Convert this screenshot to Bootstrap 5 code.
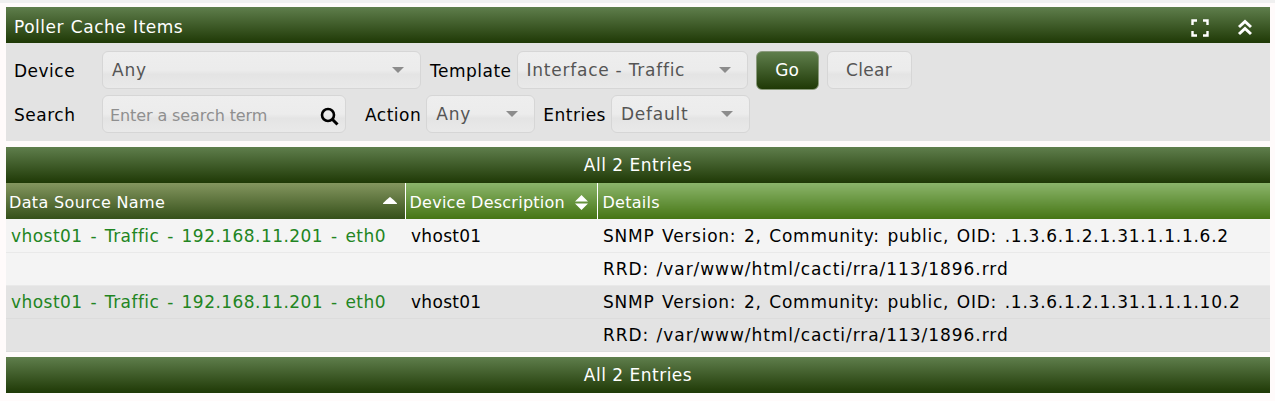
<!DOCTYPE html>
<html lang="en">
<head>
<meta charset="utf-8">
<title>Poller Cache Items</title>
<link href="https://cdn.jsdelivr.net/npm/bootstrap@5.3.0/dist/css/bootstrap.min.css" rel="stylesheet">
<style>
html,body{height:401px;overflow:hidden}
body{background:#fffbfb;font-family:"DejaVu Sans",Verdana,sans-serif;font-size:17px;color:#000;padding:7px 5px 0 6px;position:relative}
.topstrip{position:absolute;left:0;right:0;top:0;height:3px;background:#f0f0f0}
.bar-green{height:36px;background:linear-gradient(#5f7e4c,#1f3906);color:#fff}
.panel-title{padding:5px 17px 0 8px;font-size:17px;letter-spacing:.5px;word-spacing:1px}
.tool-ico{display:block}
.filter-area{background:#e3e3e3;height:98px;padding:8px 8px 0;margin-bottom:6px}
.filter-line{height:38px;margin-bottom:6px}
.flabel{white-space:nowrap;font-size:17px;letter-spacing:.5px;padding-top:3px}
.lb-device{width:88px}
.fake-select,.fake-input,.btn-clear{border:1px solid #d6d6d6;border-radius:6px;background:linear-gradient(#eeeeee 0,#ececec 50%,#e4e4e4 62%,#e9e9e9 100%);color:#555;height:38px;font-size:17px}
.fake-select{padding:2px 16px 0 9px;justify-content:space-between;letter-spacing:.75px}
.fake-select svg{flex:none;margin-top:-2px}
.w-dev{width:319px}.w-tpl{width:231px}.w-act{width:109px}.w-ent{width:139px}.w-srch{width:244px}
.fake-input{padding:4px 6px 0 7px;color:#8f8f8f;font-size:16px;letter-spacing:-.1px}
.btn-go{width:63px;height:39px;padding:2px 0 0;border:1px solid #8a9a7c;border-radius:6px;background:linear-gradient(#5f7e4c,#1f3906);color:#fff;font-size:17px;font-weight:500}
.btn-go:hover{background:linear-gradient(#5f7e4c,#1f3906);color:#fff}
.btn-clear{width:85px;padding:2px 0 0;color:#555;letter-spacing:.3px}
.ms-tpl{margin-left:9px}.ms-sel{margin-left:5px}.ms-go{margin-left:8px}.ms-act{margin-left:19px}
.count-bar{font-size:17px;letter-spacing:.5px;padding-top:2px}
.data-tbl{table-layout:fixed;width:100%;border-collapse:collapse;margin:0 0 5px;--bs-table-bg:transparent}
.data-tbl th{height:36px;padding:3px 3px 0;font-weight:400;font-size:16px;letter-spacing:.25px;color:#fff;background:linear-gradient(#8bb56b,#457514);border-right:1px solid #fff;border-bottom:0;vertical-align:middle}
.data-tbl th:last-child{border-right:0;padding-left:5px}
.data-tbl th.sorted{background:linear-gradient(#84965f,#35501a);border-right-color:#fff;letter-spacing:.35px}
.data-tbl th+th{padding-left:4px}
.data-tbl td{height:33px;padding:3px 5px 0;font-size:17px;letter-spacing:.3px;border-bottom:1px solid #e9e9e9;vertical-align:middle;white-space:nowrap;color:#000}
.data-tbl td+td{padding-left:6px}
.data-tbl td.snmp-text{letter-spacing:.75px;word-spacing:1.5px}
.data-tbl td.rrd-text{letter-spacing:.95px;word-spacing:1px}
.data-tbl tr.odd td{background:#f4f4f4}
.data-tbl tr.even td{background:#e3e3e3;border-bottom-color:#dcdcdc}
.data-tbl a{color:#228522;text-decoration:none;letter-spacing:.45px;word-spacing:2px}
.col-a{width:399px}.col-b{width:192px}
.sort-ico{margin-right:6px;flex:none}
.sort-one{margin-top:-5px;margin-right:5px}
</style>
</head>
<body>
<div class="topstrip"></div>
<div class="bar-green panel-title d-flex align-items-center justify-content-between">
  <span>Poller Cache Items</span>
  <span class="d-flex align-items-center gap-4">
    <svg class="tool-ico" width="18" height="18" viewBox="0 0 18 18" fill="none" stroke="#fff" stroke-width="2.4"><path d="M1.500 6V1.500H6M12 1.500h4.500V6M16.500 12v4.500H12M6 16.500H1.500V12"/></svg>
    <svg class="tool-ico ms-1" width="16" height="18" viewBox="0 0 16 18" fill="none" stroke="#fff" stroke-width="3"><path d="M2 8l6-5.500L14 8M2 15l6-5.500L14 15"/></svg>
  </span>
</div>
<div class="filter-area">
  <div class="filter-line d-flex align-items-center">
    <span class="flabel lb-device">Device</span>
    <div class="fake-select w-dev d-flex align-items-center"><span>Any</span><svg width="12" height="6" viewBox="0 0 12 6"><path d="M0 0h12L6 6z" fill="#8c8c8c"/></svg></div>
    <span class="flabel ms-tpl">Template</span>
    <div class="fake-select w-tpl ms-sel d-flex align-items-center"><span>Interface - Traffic</span><svg width="12" height="6" viewBox="0 0 12 6"><path d="M0 0h12L6 6z" fill="#8c8c8c"/></svg></div>
    <button type="button" class="btn btn-go ms-go">Go</button>
    <button type="button" class="btn btn-clear ms-go">Clear</button>
  </div>
  <div class="filter-line d-flex align-items-center">
    <span class="flabel lb-device">Search</span>
    <div class="fake-input w-srch d-flex align-items-center justify-content-between"><span>Enter a search term</span><svg width="19" height="19" viewBox="0 0 19 19" fill="none" stroke="#000" stroke-width="2.600"><circle cx="8" cy="8" r="6"/><path d="M12.500 12.500L17.500 17.500" stroke-width="3"/></svg></div>
    <span class="flabel ms-act">Action</span>
    <div class="fake-select w-act ms-sel d-flex align-items-center"><span>Any</span><svg width="12" height="6" viewBox="0 0 12 6"><path d="M0 0h12L6 6z" fill="#8c8c8c"/></svg></div>
    <span class="flabel ms-go">Entries</span>
    <div class="fake-select w-ent ms-sel d-flex align-items-center"><span>Default</span><svg width="12" height="6" viewBox="0 0 12 6"><path d="M0 0h12L6 6z" fill="#8c8c8c"/></svg></div>
  </div>
</div>
<div class="bar-green count-bar d-flex align-items-center justify-content-center">All 2 Entries</div>
<table class="table data-tbl">
  <colgroup><col class="col-a"><col class="col-b"><col></colgroup>
  <thead>
    <tr>
      <th class="sorted"><div class="d-flex align-items-center justify-content-between"><span>Data Source Name</span><svg class="sort-ico sort-one" width="14" height="7" viewBox="0 0 14 7"><path d="M7 0c.5 0 7 6 7 6.500S14 7 13 7H1C0 7 0 7 0 6.500S6.500 0 7 0z" fill="#fff"/></svg></div></th>
      <th><div class="d-flex align-items-center justify-content-between"><span>Device Description</span><svg class="sort-ico" width="13" height="15" viewBox="0 0 13 15"><path d="M6.500 0l6.500 6.500H0zM6.500 15L0 8.500h13z" fill="#fff"/></svg></div></th>
      <th>Details</th>
    </tr>
  </thead>
  <tbody>
    <tr class="odd"><td><a href="#">vhost01 - Traffic - 192.168.11.201 - eth0</a></td><td>vhost01</td><td class="snmp-text">SNMP Version: 2, Community: public, OID: .1.3.6.1.2.1.31.1.1.1.6.2</td></tr>
    <tr class="odd"><td></td><td></td><td class="rrd-text">RRD: /var/www/html/cacti/rra/113/1896.rrd</td></tr>
    <tr class="even"><td><a href="#">vhost01 - Traffic - 192.168.11.201 - eth0</a></td><td>vhost01</td><td class="snmp-text">SNMP Version: 2, Community: public, OID: .1.3.6.1.2.1.31.1.1.1.10.2</td></tr>
    <tr class="even"><td></td><td></td><td class="rrd-text">RRD: /var/www/html/cacti/rra/113/1896.rrd</td></tr>
  </tbody>
</table>
<div class="bar-green count-bar d-flex align-items-center justify-content-center">All 2 Entries</div>
<script src="https://cdn.jsdelivr.net/npm/bootstrap@5.3.0/dist/js/bootstrap.bundle.min.js"></script>
</body>
</html>
